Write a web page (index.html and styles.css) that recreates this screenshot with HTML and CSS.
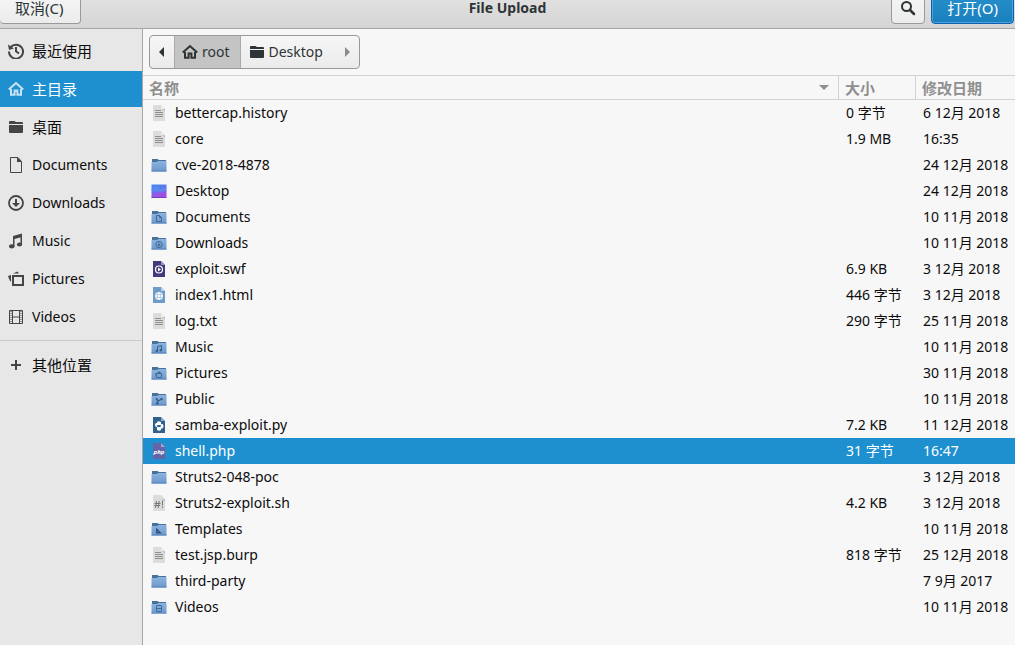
FILE: index.html
```html
<!DOCTYPE html>
<html lang="zh-CN">
<head>
  <meta charset="UTF-8">
  <meta name="viewport" content="width=device-width, initial-scale=1.0">
  <title>File Upload</title>
  <link rel="stylesheet" href="styles.css">
</head>
<body>
  <!-- Icon set -->
  <svg class="sprite" aria-hidden="true">
    <defs>
      <linearGradient id="folderFill" x1="0" y1="0" x2="0" y2="1">
        <stop offset="0" stop-color="#8db3df"/>
        <stop offset="1" stop-color="#6c98cc"/>
      </linearGradient>
      <linearGradient id="desktopFill" x1="0" y1="0" x2="0.3" y2="1">
        <stop offset="0" stop-color="#3f8ef0"/>
        <stop offset="0.5" stop-color="#6a70ee"/>
        <stop offset="1" stop-color="#a94be0"/>
      </linearGradient>
    </defs>
    <symbol id="recent" viewBox="0 0 16 16">
      <path d="M2.6 4.2A7 7 0 1 1 1 8.6" fill="none" stroke="currentColor" stroke-width="2"/>
      <path d="M0 1.5l1 5.5 5-1.6z" fill="currentColor"/>
      <path d="M8 4v4.3l3 2.2" fill="none" stroke="currentColor" stroke-width="2"/>
    </symbol>
    <symbol id="home" viewBox="0 0 16 16">
      <path d="M.8 8.6L8 2l7.2 6.6" fill="none" stroke="currentColor" stroke-width="2"/>
      <path d="M3 8v5.8h3.6V9.5h2.8v4.3H13V8" fill="none" stroke="currentColor" stroke-width="2"/>
    </symbol>
    <symbol id="folder" viewBox="0 0 16 16">
      <path d="M1 5V3q0-1 1-1h4.5q.8 0 1 1H14q1 0 1 1v1z" fill="currentColor"/>
      <path d="M1 6h14v7q0 1-1 1H2q-1 0-1-1z" fill="currentColor"/>
    </symbol>
    <symbol id="document" viewBox="0 0 16 16">
      <path d="M2.5.5H10l3.5 4v11h-11z" fill="none" stroke="currentColor"/>
      <path d="M9 0l5 5H9z" fill="currentColor"/>
    </symbol>
    <symbol id="download" viewBox="0 0 16 16">
      <circle cx="8" cy="8" r="7" fill="none" stroke="currentColor" stroke-width="1.8"/>
      <path d="M7 4h2v4h3l-4 4-4-4h3z" fill="currentColor"/>
    </symbol>
    <symbol id="music" viewBox="0 0 16 16">
      <path d="M5 3l9-2.5V4L6.5 6v7H5z" fill="currentColor"/>
      <path d="M12.5 2H14v9h-1.5z" fill="currentColor"/>
      <ellipse cx="3.8" cy="13.3" rx="2.8" ry="2.1" fill="currentColor"/>
      <ellipse cx="11.5" cy="11.5" rx="2.6" ry="2" fill="currentColor"/>
    </symbol>
    <symbol id="picture" viewBox="0 0 16 16">
      <path d="M5 5h10v9H5z" fill="none" stroke="currentColor" stroke-width="2"/>
      <path d="M0 5l3-1v7L1.5 9z M5 2.5l4.5-2 1.5 2z" fill="currentColor"/>
    </symbol>
    <symbol id="video" viewBox="0 0 16 16">
      <path d="M1.5 1.5h13v13h-13zM4.5 1v14M11.5 1v14M4.5 8h7" fill="none" stroke="currentColor"/>
      <path d="M3 2v12M13 2v12" fill="none" stroke="currentColor" stroke-dasharray="1 1"/>
    </symbol>
    <symbol id="plus" viewBox="0 0 16 16">
      <path d="M8 3v10M3 8h10" stroke="currentColor" stroke-width="2"/>
    </symbol>
    <symbol id="search" viewBox="0 0 16 16">
      <circle cx="6.5" cy="6.5" r="4.5" fill="none" stroke="currentColor" stroke-width="2"/>
      <path d="M10 10l4 4" stroke="currentColor" stroke-width="2.5" stroke-linecap="round"/>
    </symbol>
    <symbol id="left" viewBox="0 0 16 16"><path d="M10 3v10L5 8z" fill="currentColor"/></symbol>
    <symbol id="right" viewBox="0 0 16 16"><path d="M6 3v10l5-5z" fill="currentColor"/></symbol>

    <symbol id="dir" viewBox="0 0 16 16">
      <path d="M1 2h5.5L8 3h7v4H1z" fill="#47739b"/>
      <path d="M.5 5H6l1.5-1h8v10.5H.5z" fill="url(#folderFill)"/>
      <path d="M.5 14h15" stroke="#5684b8"/>
    </symbol>
    <symbol id="desktop" viewBox="0 0 16 16">
      <path d="M.5 1.5h15v13H.5z" fill="url(#desktopFill)"/>
      <path d="M.5 6L6 3l3 3 6.5-2v4L9 9 .5 8z" fill="#4fa0f4" opacity=".5"/>
      <path d="M.5 14.5h15" stroke="#6a45c4"/>
    </symbol>
    <symbol id="dir-document" viewBox="0 0 16 16">
      <use href="#dir"/>
      <path d="M5.5 6.5h3l2 2v4h-5zM8.5 6.5v2h2" fill="none" stroke="#3f6a97"/>
    </symbol>
    <symbol id="dir-download" viewBox="0 0 16 16">
      <use href="#dir"/>
      <circle cx="8" cy="9.5" r="3.2" fill="none" stroke="#3f6a97"/>
      <path d="M7.5 7.5h1v2H10l-2 2-2-2h1.5z" fill="#3f6a97"/>
    </symbol>
    <symbol id="dir-music" viewBox="0 0 16 16">
      <use href="#dir"/>
      <path d="M6.5 12V7.5l4-1V11" fill="none" stroke="#355f8c"/>
      <circle cx="5.8" cy="12" r="1.2" fill="#355f8c"/>
      <circle cx="9.8" cy="11.2" r="1.2" fill="#355f8c"/>
    </symbol>
    <symbol id="dir-picture" viewBox="0 0 16 16">
      <use href="#dir"/>
      <path d="M5.5 8.5h5v4h-5z" fill="none" stroke="#3f6a97"/>
      <path d="M4 8.500l1-.5v3zM6 8l2.500-2L10 8z" fill="#3f6a97"/>
    </symbol>
    <symbol id="dir-public" viewBox="0 0 16 16">
      <use href="#dir"/>
      <path d="M6 13l1-3 4-2M7 10L5.5 8" fill="none" stroke="#355f8c" stroke-width="1.3"/>
      <circle cx="6.3" cy="12.3" r="1.2" fill="#355f8c"/>
      <circle cx="10.5" cy="8" r="1.2" fill="#355f8c"/>
      <circle cx="5.7" cy="8" r="1" fill="#355f8c"/>
    </symbol>
    <symbol id="dir-template" viewBox="0 0 16 16">
      <use href="#dir"/>
      <path d="M5 6.5l6 6H5zM6.5 10v1H8z" fill="#2f5680" fill-rule="evenodd"/>
    </symbol>
    <symbol id="dir-video" viewBox="0 0 16 16">
      <use href="#dir"/>
      <path d="M5.500 6.500v6M10.500 6.500v6M6 9.500h4M6 6.500h4M6 12.500h4" fill="none" stroke="#3f6a97"/>
    </symbol>
    <symbol id="text" viewBox="0 0 16 16">
      <path d="M2 0h8l4 4v12H2z" fill="#dcdcdc"/>
      <path d="M10 0l4 4h-4z" fill="#ececec"/>
      <path d="M11 4h3v3z" fill="#c2c2c2"/>
      <path d="M4 5.5h6M4 7.5h8M4 9.5h8M4 11.5h8" stroke="#8e8e8e"/>
    </symbol>
    <symbol id="script" viewBox="0 0 16 16">
      <path d="M2 0h8l4 4v12H2z" fill="#dcdcdc"/>
      <path d="M11 4h3v3z" fill="#c2c2c2"/>
      <path d="M5.5 6l-1 7M8.2 6l-1 7M3.5 8.5h6M3.2 10.5h6M11.5 5.5v5M11.5 11.5v1.5" stroke="#777" fill="none"/>
    </symbol>
    <symbol id="flash" viewBox="0 0 16 16">
      <path d="M2 0h8l4 4v12H2z" fill="#423a7c"/>
      <path d="M10 0l4 4h-4z" fill="#9a94c8"/>
      <circle cx="8" cy="8.5" r="3.5" fill="none" stroke="#fff" stroke-width="1.2"/>
      <path d="M7 6.5v4l3-2z" fill="#fff"/>
    </symbol>
    <symbol id="web" viewBox="0 0 16 16">
      <path d="M2 0h8l4 4v12H2z" fill="#6e9bc9"/>
      <path d="M10 0l4 4h-4z" fill="#bcd3ea"/>
      <circle cx="8" cy="9" r="4" fill="#f0f6fb"/>
      <path d="M4 7.5h8M4 10.5h8M6.5 5.5v7M9.5 5.5v7" stroke="#a9c5e0" stroke-width=".7"/>
    </symbol>
    <symbol id="python" viewBox="0 0 16 16">
      <path d="M2 0h8l4 4v12H2z" fill="#30618d"/>
      <path d="M10 0l4 4h-4z" fill="#8fb0cd"/>
      <path d="M6 5q2-1.5 4 0v3H6.5L6 10H5q-2-2 0-4h1z" fill="#fff"/>
      <path d="M10 13q-2 1.5-4 0v-3h3.5L10 7h1.5q2 2 0 4.5H10z" fill="#fff"/>
      <path d="M5.5 8.7H9l1-1" fill="none" stroke="#30618d" stroke-width=".6"/>
    </symbol>
    <symbol id="php" viewBox="0 0 16 16">
      <path d="M2 0h8l4 4v12H2z" fill="#6464a8"/>
      <path d="M10 0l4 4h-4z" fill="#a6a6d2"/>
      <text x="8" y="11" class="php-label">php</text>
    </symbol>
  </svg>

  <header class="titlebar">
    <button type="button" class="btn cancel">取消(C)</button>
    <h1>File Upload</h1>
    <div class="actions">
      <button type="button" class="btn search" aria-label="搜索"><svg class="icon"><use href="#search"/></svg></button>
      <button type="button" class="btn open">打开(O)</button>
    </div>
  </header>

  <div class="container">
    <nav class="sidebar">
      <a href="#" class="zh"><svg class="icon"><use href="#recent"/></svg>最近使用</a>
      <a href="#" class="zh active"><svg class="icon"><use href="#home"/></svg>主目录</a>
      <a href="#" class="zh"><svg class="icon"><use href="#folder"/></svg>桌面</a>
      <a href="#"><svg class="icon"><use href="#document"/></svg>Documents</a>
      <a href="#"><svg class="icon"><use href="#download"/></svg>Downloads</a>
      <a href="#"><svg class="icon"><use href="#music"/></svg>Music</a>
      <a href="#"><svg class="icon"><use href="#picture"/></svg>Pictures</a>
      <a href="#"><svg class="icon"><use href="#video"/></svg>Videos</a>
      <hr>
      <a href="#" class="zh"><svg class="icon"><use href="#plus"/></svg>其他位置</a>
    </nav>

    <main>
      <div class="pathbar">
        <button type="button" class="arrow" aria-label="后退"><svg class="icon"><use href="#left"/></svg></button>
        <button type="button" class="current"><svg class="icon"><use href="#home"/></svg>root</button>
        <button type="button"><svg class="icon"><use href="#folder"/></svg>Desktop</button>
        <button type="button" class="arrow next" aria-label="前进"><svg class="icon"><use href="#right"/></svg></button>
      </div>

      <table class="files">
        <thead>
          <tr><th><span class="sort">名称</span></th><th class="size">大小</th><th class="date">修改日期</th></tr>
        </thead>
        <tbody>
          <tr><td><svg class="icon"><use href="#text"/></svg>bettercap.history</td><td>0 字节</td><td>6 12月 2018</td></tr>
          <tr><td><svg class="icon"><use href="#text"/></svg>core</td><td>1.9 MB</td><td>16:35</td></tr>
          <tr><td><svg class="icon"><use href="#dir"/></svg>cve-2018-4878</td><td></td><td>24 12月 2018</td></tr>
          <tr><td><svg class="icon"><use href="#desktop"/></svg>Desktop</td><td></td><td>24 12月 2018</td></tr>
          <tr><td><svg class="icon"><use href="#dir-document"/></svg>Documents</td><td></td><td>10 11月 2018</td></tr>
          <tr><td><svg class="icon"><use href="#dir-download"/></svg>Downloads</td><td></td><td>10 11月 2018</td></tr>
          <tr><td><svg class="icon"><use href="#flash"/></svg>exploit.swf</td><td>6.9 KB</td><td>3 12月 2018</td></tr>
          <tr><td><svg class="icon"><use href="#web"/></svg>index1.html</td><td>446 字节</td><td>3 12月 2018</td></tr>
          <tr><td><svg class="icon"><use href="#text"/></svg>log.txt</td><td>290 字节</td><td>25 11月 2018</td></tr>
          <tr><td><svg class="icon"><use href="#dir-music"/></svg>Music</td><td></td><td>10 11月 2018</td></tr>
          <tr><td><svg class="icon"><use href="#dir-picture"/></svg>Pictures</td><td></td><td>30 11月 2018</td></tr>
          <tr><td><svg class="icon"><use href="#dir-public"/></svg>Public</td><td></td><td>10 11月 2018</td></tr>
          <tr><td><svg class="icon"><use href="#python"/></svg>samba-exploit.py</td><td>7.2 KB</td><td>11 12月 2018</td></tr>
          <tr class="selected"><td><svg class="icon"><use href="#php"/></svg>shell.php</td><td>31 字节</td><td>16:47</td></tr>
          <tr><td><svg class="icon"><use href="#dir"/></svg>Struts2-048-poc</td><td></td><td>3 12月 2018</td></tr>
          <tr><td><svg class="icon"><use href="#script"/></svg>Struts2-exploit.sh</td><td>4.2 KB</td><td>3 12月 2018</td></tr>
          <tr><td><svg class="icon"><use href="#dir-template"/></svg>Templates</td><td></td><td>10 11月 2018</td></tr>
          <tr><td><svg class="icon"><use href="#text"/></svg>test.jsp.burp</td><td>818 字节</td><td>25 12月 2018</td></tr>
          <tr><td><svg class="icon"><use href="#dir"/></svg>third-party</td><td></td><td>7 9月 2017</td></tr>
          <tr><td><svg class="icon"><use href="#dir-video"/></svg>Videos</td><td></td><td>10 11月 2018</td></tr>
        </tbody>
      </table>
    </main>
  </div>
</body>
</html>
```

FILE: styles.css
```css
* {
  box-sizing: border-box;
}

body {
  display: flex;
  flex-direction: column;
  min-height: 100vh;
  margin: 0;
  background: #f7f7f7;
  color: #0c0c0c;
  font-family: "Noto Sans", "Noto Sans CJK SC", sans-serif;
  font-size: 14px;
  line-height: 20px;
}

button {
  font: inherit;
  color: #2e3436;
}

.sprite {
  position: absolute;
  width: 0;
  height: 0;
}

.icon {
  width: 16px;
  height: 16px;
  flex: none;
}

/* Title bar */
.titlebar {
  display: grid;
  grid-template-columns: 1fr auto 1fr;
  align-content: end;
  align-items: end;
  height: 29px;
  padding-bottom: 4px;
  border-bottom: 1px solid #a6a6a6;
  background: linear-gradient(#e0e0e0, #d5d5d5);
  overflow: hidden;
}

.titlebar h1 {
  margin: 0 0 8px;
  font-size: 14px;
  line-height: 16px;
  color: #2e3436;
}

.btn {
  height: 32px;
  padding: 0 15px;
  border: 1px solid #9a9a9a;
  border-radius: 4px;
  background: linear-gradient(#f6f6f6, #ececec);
  font-size: 15px;
  line-height: 16px;
}

.cancel {
  justify-self: start;
  padding-right: 17px;
  border-left: 0;
}

.actions {
  display: flex;
  justify-content: flex-end;
  gap: 6px;
  padding-right: 1px;
}

.search {
  display: flex;
  align-items: center;
  padding: 0 8px;
}

.open {
  border-color: #0f5fb4;
  background: linear-gradient(#2590cd, #1a80bd);
  box-shadow: inset 0 0 0 1px #4ba3d8;
  color: white;
}

.container {
  flex: 1;
  display: flex;
}

/* Places */
.sidebar {
  display: flex;
  flex-direction: column;
  gap: 2px;
  width: 143px;
  padding-top: 4px;
  border-right: 1px solid #a6a6a6;
  background: #e7e7e7;
}

.sidebar a {
  display: flex;
  align-items: center;
  gap: 8px;
  height: 36px;
  padding: 0 8px;
  color: #0c0c0c;
  text-decoration: none;
}

.sidebar .zh {
  font-size: 15px;
}

.sidebar .icon {
  color: #454545;
}

.sidebar .active,
.sidebar .active .icon {
  background: #1e90d0;
  color: white;
}

.sidebar .active .icon {
  opacity: 0.75;
}

.sidebar hr {
  width: 100%;
  margin: 3px 0 4px;
  border: 0;
  border-top: 1px solid #cbcbcb;
}

main {
  flex: 1;
  min-width: 0;
}

/* Path bar */
.pathbar {
  display: flex;
  width: fit-content;
  height: 34px;
  margin: 6px;
  border: 1px solid #999;
  border-radius: 4px;
  background: linear-gradient(#f6f6f6, #ebebeb);
  overflow: hidden;
}

.pathbar button {
  display: flex;
  align-items: center;
  gap: 4px;
  padding: 0 12px 0 8px;
  border: 0;
  background: none;
}

.pathbar .arrow {
  padding: 0 4px;
}

.pathbar .current {
  padding: 0 10px 0 7px;
  border: solid #aaa;
  border-width: 0 1px;
  background: #c4c4c4;
}

.pathbar .next {
  color: #8c8c8c;
}

/* File list */
.files {
  width: 100%;
  border-collapse: separate;
  border-spacing: 0;
  table-layout: fixed;
}

.files th {
  height: 25px;
  padding: 0 6px;
  border: solid #d2d2d2;
  border-width: 1px 0 1px 1px;
  color: #8f8f8f;
  font-size: 15px;
  text-align: left;
}

.files th:first-child {
  border-left: 0;
}

.files .size {
  width: 77px;
}

.files .date {
  width: 100px;
}

.sort {
  display: flex;
  justify-content: space-between;
  align-items: center;
  padding-right: 3px;
}

.sort::after {
  content: "";
  border: 5px solid transparent;
  border-top-color: #8f8f8f;
  border-bottom: 0;
}

.files td {
  height: 26px;
  padding: 0 0 0 8px;
  white-space: nowrap;
}

.files td .icon {
  margin-right: 8px;
  vertical-align: -3px;
}

.files .selected td {
  background: #1e90d0;
  color: white;
}

.php-label {
  fill: white;
  font-size: 6px;
  font-style: italic;
  font-weight: bold;
  text-anchor: middle;
}
```
